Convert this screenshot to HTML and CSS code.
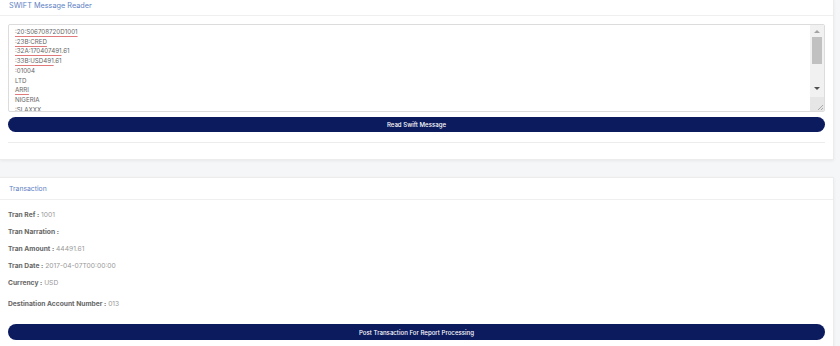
FILE: index.html
```html
<!DOCTYPE html>
<html lang="en">

<head>
    <meta charset="UTF-8">
    <meta name="viewport" content="width=device-width, initial-scale=1.0">
    <title>SWIFT Message Reader</title>
    <link rel="stylesheet" href="styles.css">
</head>

<body>
    <div class="card first">
        <div class="cardHeader">SWIFT Message Reader</div>
        <div class="cardBody">
            <div class="swiftBox">
                <div class="swiftText">
                    <div><span class="err">:20:S06708720D1001</span></div>
                    <div><span class="err">:23B:CRED</span></div>
                    <div><span class="err">:32A:170407491</span>.61</div>
                    <div><span class="err">:33B:USD491</span>.61</div>
                    <div>:01004</div>
                    <div>LTD</div>
                    <div><span class="err">ARRI</span></div>
                    <div>NIGERIA</div>
                    <div><span class="err">:SLAXXX</span></div>
                </div>
                <div class="scrollBar">
                    <div class="arrow up"></div>
                    <div class="thumb"></div>
                    <div class="arrow down"></div>
                    <div class="grip">
                        <svg width="8" height="8" viewBox="0 0 8 8"><path d="M7 2 L2 7 M7 5 L5 7" stroke="#999" stroke-width="0.8"/></svg>
                    </div>
                </div>
            </div>
            <button class="btn">Read Swift Message</button>
            <hr>
        </div>
    </div>

    <div class="card second">
        <div class="cardHeader">Transaction</div>
        <div class="cardBody">
            <p class="row"><b>Tran Ref :</b> 1001</p>
            <p class="row"><b>Tran Narration :</b></p>
            <p class="row"><b>Tran Amount :</b> 44491.61</p>
            <p class="row"><b>Tran Date :</b> 2017-04-07T00:00:00</p>
            <p class="row"><b>Currency :</b> USD</p>
            <p class="row dest"><b>Destination Account Number :</b> 013</p>
            <button class="btn">Post Transaction For Report Processing</button>
        </div>
    </div>
</body>

</html>
```

FILE: styles.css
```css
body {
    margin: 0;
    background-color: #f5f6f8;
    font-family: Inter, "Noto Sans", sans-serif;
    font-size: 6.5px;
    color: #777;
}

.card {
    background-color: white;
    border: 1px solid #ececec;
    border-left: none;
    margin-right: 6px;
    box-shadow: 0 1px 3px rgba(0, 0, 0, 0.06);
}

.first {
    margin-top: -1px;
    height: 161px;
    box-sizing: border-box;
}

.second {
    margin-top: 17px;
    height: 200px;
}

.cardHeader {
    color: #5d7fc4;
    font-size: 7.3px;
    height: 15px;
    line-height: 12px;
    padding-left: 9px;
    border-bottom: 1px solid #efefef;
}

.second .cardHeader {
    font-size: 6.8px;
    height: 21px;
    line-height: 22px;
}

.cardBody {
    padding: 8px 8px 0 8px;
}

.swiftBox {
    display: flex;
    height: 86px;
    border: 1px solid #dcdcdc;
    border-radius: 2px;
    overflow: hidden;
}

.swiftText {
    flex: 1;
    padding: 2px 0 0 6px;
    font-size: 6.2px;
    line-height: 9.7px;
    color: #666;
    white-space: nowrap;
}

.err {
    text-decoration: underline #e07a7a;
    text-decoration-thickness: 0.5px;
    text-underline-offset: 1.5px;
}

.scrollBar {
    width: 14px;
    background-color: #f1f1f1;
    display: flex;
    flex-direction: column;
    align-items: center;
}

.arrow {
    width: 0;
    height: 0;
    border-left: 3px solid transparent;
    border-right: 3px solid transparent;
}

.up {
    margin-top: 5px;
    border-bottom: 3px solid #a3a3a3;
}

.down {
    margin-top: 23px;
    border-top: 3px solid #505050;
}

.thumb {
    margin-top: 4px;
    width: 10px;
    height: 27px;
    background-color: #c1c1c1;
}

.grip {
    margin-top: 7px;
    width: 14px;
    height: 14px;
    background-color: #e6e6e6;
    display: flex;
    align-items: flex-end;
    justify-content: flex-end;
}

.btn {
    display: block;
    width: 100%;
    height: 15px;
    margin-top: 5px;
    border: none;
    border-radius: 8px;
    background-color: #0c1a5e;
    color: white;
    font-family: Inter, "Noto Sans", sans-serif;
    font-size: 6.1px;
    font-weight: 500;
}

hr {
    border: none;
    border-top: 1px solid #ececec;
    margin: 10px 0 0 0;
}

.row {
    margin: 0;
    height: 17px;
    line-height: 9px;
    font-size: 6.7px;
    color: #999;
}

.row:first-child {
    margin-top: 3px;
}

.row b {
    color: #666;
    font-weight: 700;
}

.dest {
    margin-top: 4px;
}

.second .btn {
    margin-top: 7px;
    height: 16px;
}
```
